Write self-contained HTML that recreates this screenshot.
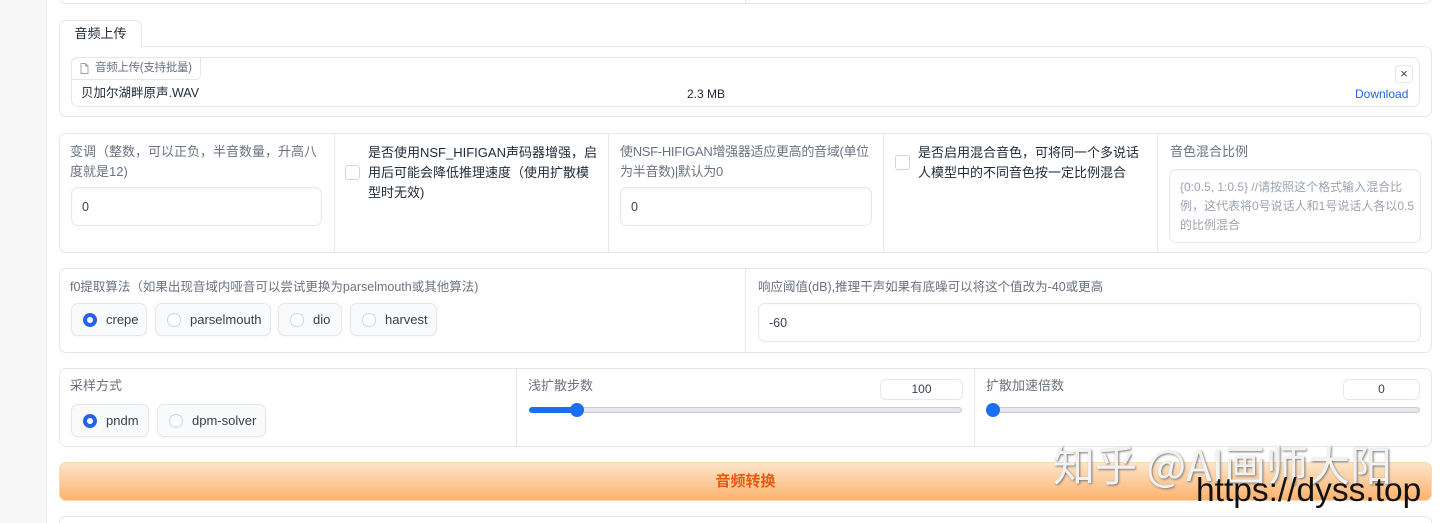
<!DOCTYPE html>
<html style="width:1440px;height:523px;overflow:hidden"><head><meta charset="utf-8"><style>
*{box-sizing:border-box;margin:0;padding:0}
body{width:1440px;height:523px;overflow:hidden;background:#fff;font-family:"Liberation Sans","Noto Sans CJK SC",sans-serif;font-size:13px;color:#374151;position:relative}
.a{position:absolute}
.box{position:absolute;border:1px solid #e5e7eb;border-radius:7px;background:#fff}
.vl{position:absolute;width:1px;background:#e5e7eb}
.lbl{position:absolute;color:#6b7280;font-size:13px;line-height:20px}
.inp{position:absolute;border:1px solid #e5e7eb;border-radius:7px;background:#fff;font-size:12.5px;color:#374151;padding-left:10px;display:flex;align-items:center;box-shadow:inset 0 1px 2px rgba(0,0,0,.03)}
.cb{position:absolute;width:15px;height:15px;border:1px solid #d1d5db;border-radius:3px;background:#fff}
.txt{position:absolute;font-size:13px;line-height:20px;color:#1f2937}
.rad{position:absolute;height:33px;border:1px solid #e5e7eb;border-radius:7px;background:#f9fafb;display:flex;align-items:center;padding-left:11px;font-size:13px;color:#374151;box-shadow:0 1px 2px rgba(0,0,0,.04)}
.rad i{width:14px;height:14px;border-radius:50%;border:1px solid #d1d5db;background:#fff;margin-right:9px;display:inline-block}
.rad i.on{border:4px solid #2563eb}
.trk{position:absolute;height:6px;border-radius:3px;background:#e5e7eb;border:1px solid #c7cbd1}
.kn{position:absolute;width:14px;height:14px;border-radius:50%;background:#1a6ff0}
.num{position:absolute;height:21px;border:1px solid #e5e7eb;border-radius:6px;font-size:12px;text-align:center;line-height:19px;color:#374151}
</style></head><body>
<div class="a" style="left:0;top:0;width:47px;height:523px;background:#f7f7f8;border-right:1px solid #eceef1"></div>
<div class="box" style="left:59px;top:-10px;width:1373px;height:14px"></div>
<div class="vl" style="left:745px;top:0;height:3px"></div>

<div class="box" style="left:59px;top:46px;width:1373px;height:71px;border-radius:0 7px 7px 7px"></div>
<div class="a" style="left:59px;top:20px;width:83px;height:28px;border:1px solid #e5e7eb;border-bottom:none;border-radius:7px 7px 0 0;background:#fff;font-size:13px;color:#1f2937;line-height:26px;text-align:center">音频上传</div>
<div class="box" style="left:71px;top:57px;width:1349px;height:50px"></div>
<div class="a" style="left:71px;top:57px;width:130px;height:23px;border:1px solid #e5e7eb;border-radius:6px 0 6px 0;font-size:11.5px;color:#6b7280;line-height:21px;padding-left:23px;white-space:nowrap;letter-spacing:-0.3px">音频上传(支持批量)</div>
<svg class="a" style="left:80px;top:63px" width="9" height="11" viewBox="0 0 9 11"><path d="M1 .5h4.5L8 3v7.5H1z M5.5 .5V3H8" fill="none" stroke="#9ca3af" stroke-width="1"/></svg>
<div class="txt" style="left:81px;top:83px;font-size:12.5px">贝加尔湖畔原声.WAV</div>
<div class="txt" style="left:687px;top:84px;font-size:12px">2.3 MB</div>
<div class="a" style="left:1395px;top:65px;width:18px;height:18px;border:1px solid #e5e7eb;border-radius:4px;text-align:center;line-height:15px;font-size:13px;color:#374151">×</div>
<div class="txt" style="left:1355px;top:84px;font-size:12px;color:#2563eb">Download</div>

<div class="box" style="left:59px;top:133px;width:1373px;height:120px"></div>
<div class="vl" style="left:334px;top:134px;height:118px"></div>
<div class="vl" style="left:608px;top:134px;height:118px"></div>
<div class="vl" style="left:883px;top:134px;height:118px"></div>
<div class="vl" style="left:1157px;top:134px;height:118px"></div>
<div class="lbl" style="left:70px;top:142px;width:255px">变调（整数，可以正负，半音数量，升高八度就是12)</div>
<div class="inp" style="left:71px;top:187px;width:251px;height:39px">0</div>
<div class="cb" style="left:345px;top:165px"></div>
<div class="txt" style="left:368px;top:143px;width:232px">是否使用NSF_HIFIGAN声码器增强，启用后可能会降低推理速度（使用扩散模型时无效)</div>
<div class="lbl" style="left:620px;top:142px;width:255px;letter-spacing:-0.3px">使NSF-HIFIGAN增强器适应更高的音域(单位为半音数)|默认为0</div>
<div class="inp" style="left:620px;top:187px;width:252px;height:39px">0</div>
<div class="cb" style="left:895px;top:155px"></div>
<div class="txt" style="left:918px;top:143px;width:230px">是否启用混合音色，可将同一个多说话人模型中的不同音色按一定比例混合</div>
<div class="lbl" style="left:1170px;top:142px">音色混合比例</div>
<div class="inp" style="left:1169px;top:169px;width:252px;height:74px;align-items:flex-start;padding-top:8px;line-height:19px;color:#9ca3af;font-size:12px">{0:0.5, 1:0.5} //请按照这个格式输入混合比例，这代表将0号说话人和1号说话人各以0.5的比例混合</div>

<div class="box" style="left:59px;top:268px;width:1373px;height:85px"></div>
<div class="vl" style="left:745px;top:269px;height:83px"></div>
<div class="lbl" style="left:70px;top:277px;font-size:12.5px">f0提取算法（如果出现音域内哑音可以尝试更换为parselmouth或其他算法)</div>
<div class="rad" style="left:71px;top:303px;width:76px"><i class="on"></i>crepe</div>
<div class="rad" style="left:155px;top:303px;width:116px"><i></i>parselmouth</div>
<div class="rad" style="left:278px;top:303px;width:64px"><i></i>dio</div>
<div class="rad" style="left:350px;top:303px;width:87px"><i></i>harvest</div>
<div class="lbl" style="left:758px;top:277px;font-size:12.5px">响应阈值(dB),推理干声如果有底噪可以将这个值改为-40或更高</div>
<div class="inp" style="left:758px;top:303px;width:663px;height:39px">-60</div>

<div class="box" style="left:59px;top:368px;width:1373px;height:79px"></div>
<div class="vl" style="left:516px;top:369px;height:77px"></div>
<div class="vl" style="left:974px;top:369px;height:77px"></div>
<div class="lbl" style="left:70px;top:376px">采样方式</div>
<div class="rad" style="left:71px;top:404px;width:78px"><i class="on"></i>pndm</div>
<div class="rad" style="left:157px;top:404px;width:109px"><i></i>dpm-solver</div>
<div class="lbl" style="left:528px;top:376px">浅扩散步数</div>
<div class="num" style="left:880px;top:379px;width:83px">100</div>
<div class="a" style="left:529px;top:407px;width:48px;height:6px;background:#1a6ff0;border-radius:3px"></div>
<div class="trk" style="left:570px;top:407px;width:392px"></div>
<div class="kn" style="left:570px;top:403px"></div>
<div class="lbl" style="left:986px;top:376px">扩散加速倍数</div>
<div class="num" style="left:1343px;top:379px;width:77px">0</div>
<div class="trk" style="left:988px;top:407px;width:432px"></div>
<div class="kn" style="left:986px;top:403px"></div>

<div class="a" style="left:59px;top:462px;width:1373px;height:39px;border-radius:7px;background:linear-gradient(180deg,#fde5c8,#fbb36e);border:1px solid #fcd9b0;text-align:center;line-height:37px;font-size:15px;font-weight:bold;color:#ea580c">音频转换</div>
<div class="box" style="left:59px;top:516px;width:1373px;height:7px;border-bottom:none;border-radius:7px 7px 0 0"></div>

<div class="a" style="left:1053px;top:440px;font-size:42px;line-height:48px;color:#f2f2f2;text-shadow:1px 1px 2px #777;font-family:'Noto Sans CJK SC','Liberation Sans',sans-serif;white-space:nowrap">知乎 @AI画师大阳</div>
<div class="a" style="left:1196px;top:470px;font-size:33.5px;line-height:42px;color:#111;font-family:'Liberation Sans',sans-serif;white-space:nowrap">https://dyss.top</div>
</body></html>
